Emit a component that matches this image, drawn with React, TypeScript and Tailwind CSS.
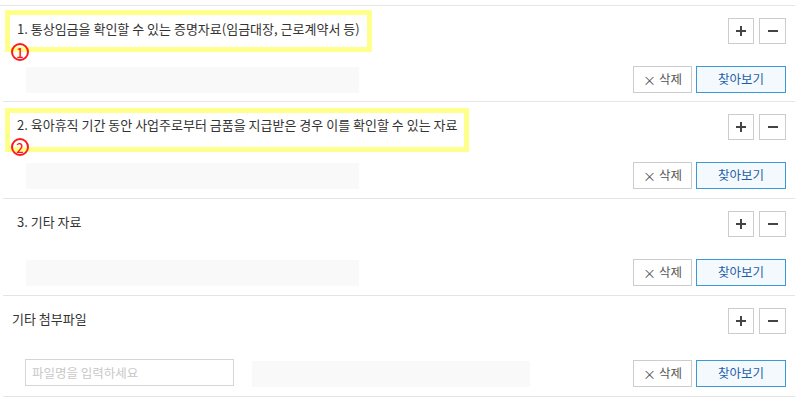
import type { ReactNode } from 'react'

const FONT = { fontFamily: '"Noto Sans CJK KR", "Noto Sans", sans-serif' }

function PlusMinus() {
  return (
    <div className="flex gap-[5px] pt-[12px]">
      <button className="w-[26px] h-[26px] border border-[#cccccc] bg-white flex items-center justify-center">
        <svg width="10" height="10" viewBox="0 0 10 10">
          <path d="M0 5h10M5 0v10" stroke="#444" strokeWidth="2" />
        </svg>
      </button>
      <button className="w-[27px] h-[26px] border border-[#cccccc] bg-white flex items-center justify-center">
        <svg width="10" height="10" viewBox="0 0 10 10">
          <path d="M0 5h10" stroke="#444" strokeWidth="2" />
        </svg>
      </button>
    </div>
  )
}

function FileButtons() {
  return (
    <div className="ml-auto flex gap-[4px]">
      <button className="w-[59px] h-[27px] border border-[#cccccc] bg-white text-[12.5px] text-[#555] flex items-center justify-center gap-[3px]">
        <span className="text-[13px] leading-none">×</span>
        <span>삭제</span>
      </button>
      <button className="w-[90px] h-[27px] border border-[#3a9ad9] bg-[#f4f9fe] text-[12.5px] text-[#1f5fa8] flex items-center justify-center">
        찾아보기
      </button>
    </div>
  )
}

function Circle({ n, top }: { n: string; top: string }) {
  return (
    <span
      className={`absolute left-[1px] ${top} w-[18px] h-[18px] rounded-full border-2 border-[#ff1a1a] text-[#ff1a1a] text-[13px] font-medium leading-none flex items-center justify-center`}
    >
      {n}
    </span>
  )
}

function Section({ title, row, last }: { title: ReactNode; row: ReactNode; last?: boolean }) {
  return (
    <section className={`ml-[3px] pr-[9px] border-b border-[#e5e5e5] ${last ? 'pb-[9px]' : 'pb-[8px]'}`}>
      <div className="h-[46px] flex justify-between items-start">
        {title}
        <PlusMinus />
      </div>
      {row}
    </section>
  )
}

const GrayBar = () => <div className="ml-[23px] w-[333px] h-[26px] bg-[#f9f9f9]" />

export default function App() {
  return (
    <div className="w-[797px] h-[400px] bg-white text-[#333] overflow-hidden" style={FONT}>
      <div className="mt-[5px] w-[795px] border-t border-[#e5e5e5]">
        <Section
          title={
            <div className="relative mt-[4px] ml-[2px] h-[42px] border-[5px] border-[#ffff8c] px-[7px] pt-[6px] text-[13px] leading-[16px] whitespace-nowrap">
              1. 통상임금을 확인할 수 있는 증명자료(임금대장, 근로계약서 등)
              <Circle n="1" top="top-[28px]" />
            </div>
          }
          row={
            <div className="mt-[14px] flex items-center">
              <GrayBar />
              <FileButtons />
            </div>
          }
        />
        <Section
          last
          title={
            <div className="relative mt-[6px] ml-[2px] h-[44px] border-[5px] border-[#ffff8c] px-[7px] pt-[4px] text-[13px] leading-[16px] whitespace-nowrap">
              2. 육아휴직 기간 동안 사업주로부터 금품을 지급받은 경우 이를 확인할 수 있는 자료
              <Circle n="2" top="top-[25px]" />
            </div>
          }
          row={
            <div className="mt-[14px] flex items-center">
              <GrayBar />
              <FileButtons />
            </div>
          }
        />
        <Section
          last
          title={<div className="pt-[15px] pl-[14px] text-[13px] leading-[16px]">3. 기타 자료</div>}
          row={
            <div className="mt-[14px] flex items-center">
              <GrayBar />
              <FileButtons />
            </div>
          }
        />
        <Section
          last
          title={<div className="pt-[15px] pl-[9px] text-[13px] leading-[16px]">기타 첨부파일</div>}
          row={
            <div className="mt-[18px] flex items-center">
              <input
                placeholder="파일명을 입력하세요"
                className="ml-[22px] mt-[-3px] w-[209px] h-[27px] border border-[#d5d5d5] px-[6px] text-[12.5px] text-[#333] placeholder:text-[#c8c8c8] outline-none"
                style={FONT}
              />
              <div className="ml-[18px] w-[278px] h-[26px] bg-[#f9f9f9]" />
              <FileButtons />
            </div>
          }
        />
      </div>
    </div>
  )
}
